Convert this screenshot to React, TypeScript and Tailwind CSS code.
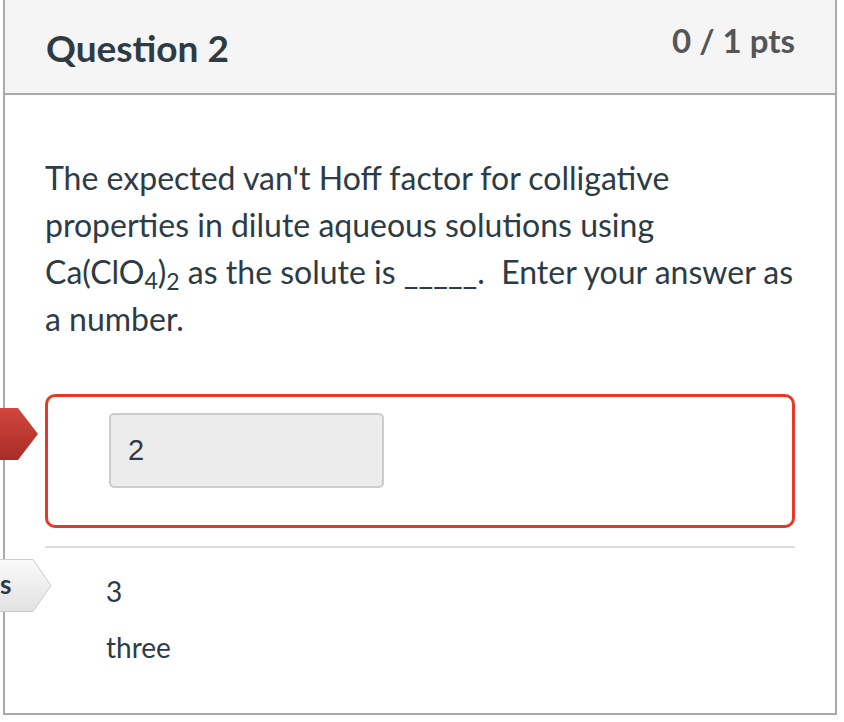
import React from "react";

export default function App() {
  return (
    <div className="relative w-[844px] h-[722px] bg-white overflow-hidden" style={{ fontFamily: "Lato, 'Noto Sans', sans-serif" }}>
      <div className="ml-[3px] w-[834px] h-[715px] border-l-2 border-r-2 border-b-2 border-[#aaaaaa] flex flex-col">
        <div className="h-[95px] bg-[#f5f5f5] border-b-2 border-[#aaaaaa] flex justify-between items-start pl-[41px] pr-[40px]">
          <h2 className="mt-[26px] text-[37px] font-bold text-[#2d3b45] leading-[44px]">Question 2</h2>
          <div className="mt-[22px] text-[33px] font-bold text-[#555555] leading-[36px]">0 / 1 pts</div>
        </div>
        <div className="flex flex-col px-[40px] pt-[59px]">
          <p className="text-[32px] leading-[47px] text-[#2d3b45] whitespace-nowrap">
            The expected van't Hoff factor for colligative
            <br />
            properties in dilute aqueous solutions using
            <br />
            Ca(ClO<sub className="text-[23px] leading-none relative top-[5px] align-baseline">4</sub>)<sub className="text-[23px] leading-none relative top-[6px] align-baseline">2</sub> as the solute is _____.&nbsp; Enter your answer as
            <br />
            a number.
          </p>
          <div className="mt-[52px] h-[134px] border-[3px] border-[#e8382a] rounded-[10px] pl-[61px] pt-[16px]">
            <div className="w-[275px] h-[75px] bg-[#ececec] border-2 border-[#cccccc] rounded-[5px] flex items-center pl-[17px] text-[29px] text-[#2d3b45]" style={{ fontFamily: "'Liberation Sans', Arial, sans-serif" }}>
              2
            </div>
          </div>
          <div className="mt-[18px] h-[2px] bg-[#dddddd]" />
          <div className="flex flex-col gap-[18px] pl-[61px] pt-[24px] text-[28px] text-[#2d3b45] leading-[38px]">
            <div>3</div>
            <div>three</div>
          </div>
        </div>
      </div>
      {/* red tag */}
      <div className="absolute left-0 top-[408px] w-[38px] h-[52px]">
        <svg width="38" height="52" viewBox="0 0 38 52">
          <defs>
            <linearGradient id="rg" x1="0" y1="0" x2="0" y2="1">
              <stop offset="0" stopColor="#d2473f" />
              <stop offset="1" stopColor="#a82d26" />
            </linearGradient>
          </defs>
          <polygon points="0,0 18,0 38,26 18,52 0,52" fill="url(#rg)" />
        </svg>
      </div>
      {/* gray tag */}
      <div className="absolute left-0 top-[559px] w-[52px] h-[53px]">
        <svg width="52" height="53" viewBox="0 0 52 53" className="absolute inset-0">
          <defs>
            <linearGradient id="gg" x1="0" y1="0" x2="0" y2="1">
              <stop offset="0" stopColor="#fafafa" />
              <stop offset="1" stopColor="#e2e2e2" />
            </linearGradient>
          </defs>
          <polygon points="-2,0.5 33,0.5 51,26.5 33,52.5 -2,52.5" fill="url(#gg)" stroke="#cccccc" strokeWidth="1" />
        </svg>
        <span className="absolute left-0 top-[9px] text-[26px] font-bold text-[#2d3b45] leading-[32px]">s</span>
      </div>
    </div>
  );
}
